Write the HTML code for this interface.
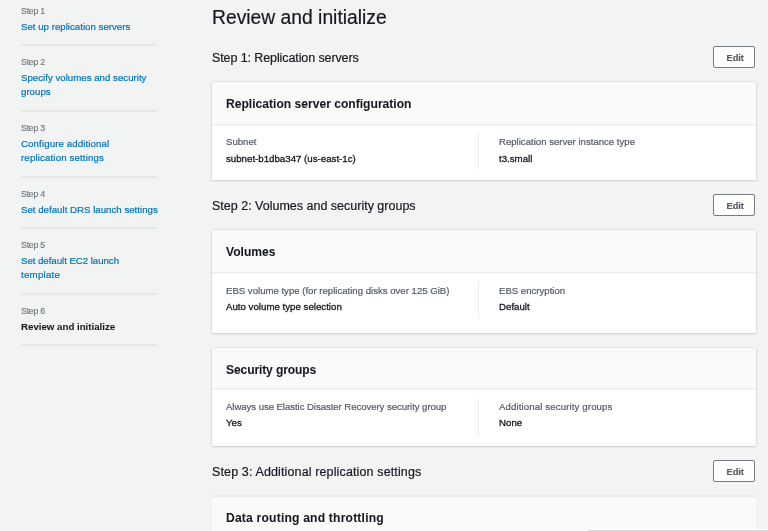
<!DOCTYPE html>
<html>
<head>
<meta charset="utf-8">
<style>
html,body{margin:0;padding:0;}
body{width:768px;height:531px;overflow:hidden;background:#f2f3f3;position:relative;font-family:"Liberation Sans",sans-serif;color:#16191f;}
.a{position:absolute;white-space:nowrap;line-height:1;-webkit-text-stroke:0.2px currentColor;will-change:transform;}
.sl{font-size:8.9px;color:#6d747b;letter-spacing:-0.28px;-webkit-text-stroke:0.12px currentColor;}
.lk{font-size:9.7px;color:#0073bb;}
.nd{position:absolute;left:21px;width:136px;height:2px;background:#e6e9e9;}
.h1{font-size:19.3px;color:#16191f;}
.h2{font-size:12.5px;color:#16191f;}
.ch{font-size:12.1px;font-weight:bold;color:#16191f;-webkit-text-stroke:0.05px currentColor;}
.lb{font-size:9.6px;color:#545b64;}
.vl{font-size:9.7px;color:#16191f;-webkit-text-stroke:0.3px currentColor;}
.card{position:absolute;left:212px;width:544px;background:#fff;box-shadow:0 1px 1.5px 0 rgba(0,28,36,.14),1px 0 1.5px 0 rgba(0,28,36,.07),-1px 0 1.5px 0 rgba(0,28,36,.07),0 -1px 1px 0 rgba(0,28,36,.03);}
.card .hd{position:absolute;left:0;top:0;width:100%;background:#fafafa;border-bottom:1px solid #eceeee;box-shadow:0 1px 0 #f5f6f6;}
.btn{position:absolute;left:713px;width:40px;height:20px;border:1px solid #757c83;border-radius:2px;background:#fff;}
.btn span{will-change:transform;-webkit-text-stroke:0.15px currentColor;position:absolute;left:1.5px;right:0;text-align:center;font-size:9.2px;font-weight:bold;color:#545b64;line-height:1;}
.vd{position:absolute;left:266px;width:1px;background:#eceeee;}
</style>
</head>
<body>
<div id="wrap" style="position:absolute;left:0;top:0;width:768px;height:531px;filter:grayscale(0.0001)">
<!-- nav -->
<div class="a sl" style="left:21px;top:6.6px">Step 1</div>
<div class="a lk" style="left:21px;top:21.7px">Set up replication servers</div>
<div class="nd" style="top:44px"></div>

<div class="a sl" style="left:21px;top:57.6px">Step 2</div>
<div class="a lk" style="left:21px;top:72.8px">Specify volumes and security</div>
<div class="a lk" style="left:21px;top:87.3px">groups</div>
<div class="nd" style="top:110px"></div>

<div class="a sl" style="left:21px;top:123.7px">Step 3</div>
<div class="a lk" style="left:21px;top:138.5px;letter-spacing:0.11px">Configure additional</div>
<div class="a lk" style="left:21px;top:153.2px;letter-spacing:0.14px">replication settings</div>
<div class="nd" style="top:176px"></div>

<div class="a sl" style="left:21px;top:189.6px">Step 4</div>
<div class="a lk" style="left:21px;top:204.7px">Set default DRS launch settings</div>
<div class="nd" style="top:227px"></div>

<div class="a sl" style="left:21px;top:241px">Step 5</div>
<div class="a lk" style="left:21px;top:255.6px;letter-spacing:-0.05px">Set default EC2 launch</div>
<div class="a lk" style="left:21px;top:270.2px;letter-spacing:0.25px">template</div>
<div class="nd" style="top:293px"></div>

<div class="a sl" style="left:21px;top:306.6px">Step 6</div>
<div class="a lk" style="left:21px;top:321.7px;color:#16191f;font-weight:bold;-webkit-text-stroke:0.05px currentColor">Review and initialize</div>
<div class="nd" style="top:344px"></div>

<!-- main -->
<div class="a h1" style="left:212px;top:8.2px">Review and initialize</div>

<div class="a h2" style="left:212px;top:51.9px;letter-spacing:-0.1px">Step 1: Replication servers</div>
<div class="btn" style="top:46px"><span style="top:6.6px">Edit</span></div>
<div class="card" style="top:82px;height:98px">
  <div class="hd" style="height:42px"><div class="a ch" style="left:14px;top:15.8px">Replication server configuration</div></div>
  <div class="a lb" style="left:14px;top:55px">Subnet</div>
  <div class="a vl" style="left:14px;top:71.7px">subnet-b1dba347 (us-east-1c)</div>
  <div class="vd" style="top:51px;height:37px"></div>
  <div class="a lb" style="left:287px;top:55px">Replication server instance type</div>
  <div class="a vl" style="left:287px;top:71.7px">t3.small</div>
</div>

<div class="a h2" style="left:212px;top:199.6px">Step 2: Volumes and security groups</div>
<div class="btn" style="top:194px"><span style="top:6.6px">Edit</span></div>
<div class="card" style="top:230px;height:103px">
  <div class="hd" style="height:42px"><div class="a ch" style="left:14px;top:15.8px">Volumes</div></div>
  <div class="a lb" style="left:14px;top:55.5px">EBS volume type (for replicating disks over 125 GiB)</div>
  <div class="a vl" style="left:14px;top:71.7px">Auto volume type selection</div>
  <div class="vd" style="top:51px;height:37px"></div>
  <div class="a lb" style="left:287px;top:55.5px">EBS encryption</div>
  <div class="a vl" style="left:287px;top:71.7px">Default</div>
</div>

<div class="card" style="top:348px;height:98px">
  <div class="hd" style="height:40px"><div class="a ch" style="left:14px;top:15.8px;letter-spacing:-0.13px">Security groups</div></div>
  <div class="a lb" style="left:14px;top:54px;letter-spacing:-0.06px">Always use Elastic Disaster Recovery security group</div>
  <div class="a vl" style="left:14px;top:70.2px">Yes</div>
  <div class="vd" style="top:51px;height:37px"></div>
  <div class="a lb" style="left:287px;top:54px;letter-spacing:0.14px">Additional security groups</div>
  <div class="a vl" style="left:287px;top:70.2px">None</div>
</div>

<div class="a h2" style="left:212px;top:465.6px;letter-spacing:0.13px">Step 3: Additional replication settings</div>
<div class="btn" style="top:460px"><span style="top:6.6px">Edit</span></div>
<div class="card" style="top:497px;height:60px;box-shadow:0 -1px 0 #ebeded,0 -2px 1px rgba(0,28,36,.03)">
  <div class="hd" style="height:42px"><div class="a ch" style="left:14px;top:14.8px;letter-spacing:0.2px">Data routing and throttling</div></div>
</div>
<div style="position:absolute;left:588px;top:529px;width:180px;height:1px;background:#fdfdfd"></div>
<div style="position:absolute;left:588px;top:530px;width:180px;height:1px;background:#d9d9d9"></div>
</div>
</body>
</html>
